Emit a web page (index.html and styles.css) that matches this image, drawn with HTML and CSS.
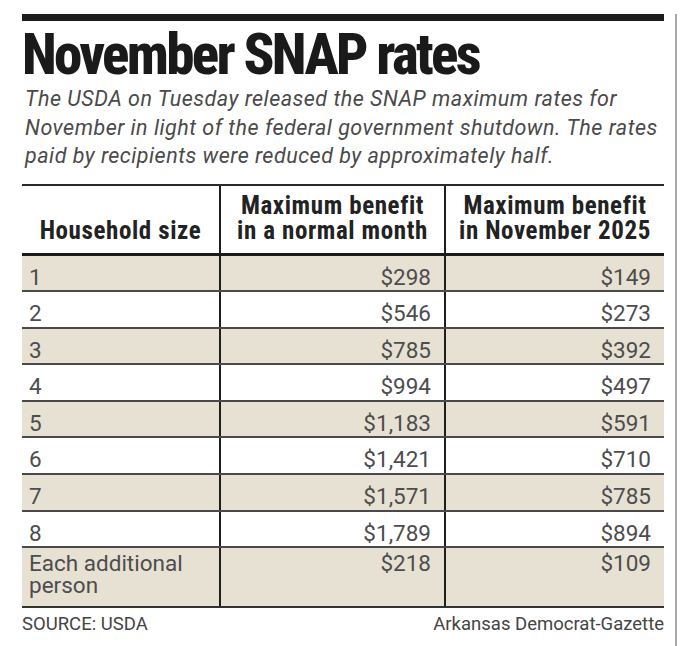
FILE: index.html
```html
<!DOCTYPE html>
<html lang="en">
<head>
<meta charset="utf-8">
<title>November SNAP rates</title>
<link rel="stylesheet" href="styles.css">
</head>
<body>
<div class="page">
  <div class="graphic">
    <div class="top-bar"></div>
    <h1 class="title">November SNAP rates</h1>
    <p class="intro">The USDA on Tuesday released the SNAP maximum rates for<br>November in light of the federal government shutdown. The rates<br>paid by recipients were reduced by approximately half.</p>
    <div class="table">
      <div class="row head">
        <div class="cell c1">Household size</div>
        <div class="cell c2">Maximum benefit<br>in a normal month</div>
        <div class="cell c3">Maximum benefit<br>in November 2025</div>
      </div>
      <div class="row shade"><div class="cell c1">1</div><div class="cell c2">$298</div><div class="cell c3">$149</div></div>
      <div class="row"><div class="cell c1">2</div><div class="cell c2">$546</div><div class="cell c3">$273</div></div>
      <div class="row shade"><div class="cell c1">3</div><div class="cell c2">$785</div><div class="cell c3">$392</div></div>
      <div class="row"><div class="cell c1">4</div><div class="cell c2">$994</div><div class="cell c3">$497</div></div>
      <div class="row shade"><div class="cell c1">5</div><div class="cell c2">$1,183</div><div class="cell c3">$591</div></div>
      <div class="row"><div class="cell c1">6</div><div class="cell c2">$1,421</div><div class="cell c3">$710</div></div>
      <div class="row shade"><div class="cell c1">7</div><div class="cell c2">$1,571</div><div class="cell c3">$785</div></div>
      <div class="row"><div class="cell c1">8</div><div class="cell c2">$1,789</div><div class="cell c3">$894</div></div>
      <div class="row shade last"><div class="cell c1">Each additional<br>person</div><div class="cell c2">$218</div><div class="cell c3">$109</div></div>
    </div>
    <div class="footer">
      <span>SOURCE: USDA</span>
      <span>Arkansas Democrat-Gazette</span>
    </div>
  </div>
  <div class="edge-rule"></div>
</div>
</body>
</html>
```
FILE: styles.css
```css
html, body {
  margin: 0;
  padding: 0;
  background: #ffffff;
}

body {
  font-family: "Roboto", "Liberation Sans", sans-serif;
  font-stretch: 80%;
  color: #222;
}

.page {
  display: flex;
  gap: 11px;
  padding: 14px 0 0 22px;
  height: 646px;
  box-sizing: border-box;
}

.graphic {
  width: 642px;
  display: flex;
  flex-direction: column;
}

.edge-rule {
  width: 2px;
  background: #a8a8a8;
}

.top-bar {
  height: 7px;
  background: #1c1c1c;
}

.title {
  margin: 5px 0 0 0;
  font-stretch: 75%;
  font-size: 57px;
  line-height: 57px;
  font-weight: 800;
  letter-spacing: -2.7px;
  color: #1a1a1a;
}

.intro {
  margin: 2px 0 0 3px;
  font-stretch: 100%;
  font-size: 21.5px;
  line-height: 28.5px;
  letter-spacing: 0.5px;
  font-style: italic;
  color: #4a4a4a;
  white-space: nowrap;
}

.table {
  margin-top: 13px;
  border-top: 2px solid #2a2a2a;
  border-bottom: 2px solid #333;
}

.row {
  display: grid;
  grid-template-columns: 197px 225px 220px;
  height: 36.6px;
  box-sizing: border-box;
  border-bottom: 2px solid #4a4a4a;
}

.row.shade {
  background: #e7e1d4;
}

.row.head {
  height: 70px;
  border-bottom: 3px solid #1a1a1a;
}

.row.last {
  height: 58px;
  border-bottom: none;
}

.cell {
  font-stretch: 94%;
  font-size: 22.5px;
  line-height: 22px;
  color: #4d4d4d;
  padding-top: 10px;
  box-sizing: border-box;
}

.cell.c1 {
  padding-left: 7px;
}

.cell.c2,
.cell.c3 {
  border-left: 2px solid #1e1e1e;
  text-align: right;
  padding-right: 13px;
}

.row.last .cell {
  padding-top: 4px;
}

.row.head .cell {
  display: flex;
  flex-direction: column;
  justify-content: flex-end;
  text-align: center;
  padding: 0 0 10px 0;
  font-stretch: 80%;
  font-size: 25px;
  line-height: 25px;
  letter-spacing: 0.6px;
  font-weight: 700;
  color: #222;
}

.footer {
  display: flex;
  justify-content: space-between;
  margin-top: 6px;
  font-stretch: 100%;
  font-size: 18.5px;
  line-height: 20px;
  color: #444;
}
```
